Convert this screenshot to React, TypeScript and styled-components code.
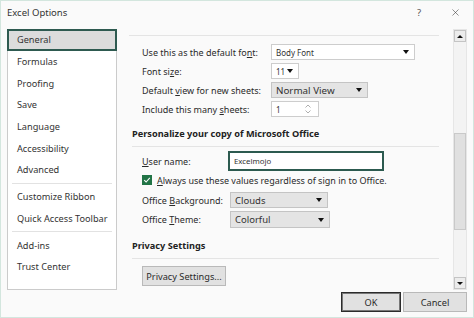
import React from "react";
import styled, {createGlobalStyle, css} from "styled-components";
import {X} from "lucide-react";

const GlobalStyle = createGlobalStyle`
  html, body {
    margin: 0;
    padding: 0;
  }
  body {
    font-family: "Noto Sans", "Open Sans", sans-serif;
    font-size: 9px;
    color: #262626;
    background: #fff;
  }
`;

const Window = styled.div`
  width: 474px;
  height: 318px;
  box-sizing: border-box;
  background: #fafafa;
  border: 1px solid #d3e6de;
  display: flex;
  flex-direction: column;
  overflow: hidden;
`;

const TitleBar = styled.div`
  height: 28px;
  box-sizing: border-box;
  padding: 0 0 5px 6px;
  display: flex;
  align-items: center;
  font-size: 9.5px;
  color: #333;
`;

const Title = styled.div`
  flex: 1;
`;

const Help = styled.div`
  width: 36px;
  text-align: center;
  color: #555;
  font-size: 9.5px;
`;

const Close = styled.div`
  width: 36px;
  display: flex;
  justify-content: center;
  color: #333;
`;

const Body = styled.div`
  height: 261px;
  display: flex;
  padding: 0 6px 0 6px;
`;

const Nav = styled.ul`
  width: 110px;
  box-sizing: border-box;
  margin: 0;
  padding: 0;
  list-style: none;
  background: #fff;
  border: 1px solid #cbcbcb;
  border-top: none;
`;

const NavItem = styled.li<{$active?: boolean}>`
  height: 21.7px;
  box-sizing: border-box;
  display: flex;
  align-items: center;
  padding-left: 9px;
  font-size: 9.2px;
  color: #333;
  white-space: nowrap;
  ${p => p.$active && css`
    background: #dcdcdc;
    border: 2px solid #2e5a50;
    padding-left: 8px;
    margin: 0 -1px;
  `}
`;

const NavRule = styled.li`
  height: 5px;
  display: flex;
  align-items: center;
  padding: 0 4px;
  &::after {
    content: "";
    flex: 1;
    height: 1px;
    background: #e2e2e2;
  }
`;

const Pane = styled.div`
  flex: 1;
  display: flex;
  flex-direction: column;
  padding: 6px 0 0 12px;
`;

const Rule = styled.div<{$inset?: number}>`
  height: 1px;
  background: #e4e4e4;
  margin: 0 6px 0 ${p => p.$inset ?? 0}px;
`;

const Rows = styled.div<{$top?: number}>`
  display: flex;
  flex-direction: column;
  gap: 3px;
  padding-left: 13px;
  margin-top: ${p => p.$top ?? 0}px;
`;

const Row = styled.div<{$label: number; $h?: number}>`
  display: grid;
  grid-template-columns: ${p => p.$label}px max-content;
  align-items: center;
  height: ${p => p.$h ?? 16}px;
`;

const Label = styled.span`
  color: #2a2a2a;
  white-space: nowrap;
`;

const Heading = styled.div<{$top: number}>`
  margin: ${p => p.$top}px 0 5px 3px;
  font-weight: 700;
  font-size: 9.2px;
  line-height: 14px;
  color: #222;
`;

const Box = styled.div<{$w: number; $gray?: boolean; $fs?: number}>`
  width: ${p => p.$w}px;
  height: 100%;
  box-sizing: border-box;
  display: flex;
  align-items: center;
  padding: 0 5px 0 4px;
  border: 1px solid ${p => p.$gray ? "#c4c4c4" : "#cdcdcd"};
  background: ${p => p.$gray ? "#e4e4e4" : "#fff"};
  font-size: ${p => p.$fs ?? 8}px;
  color: #333;
`;

const BoxText = styled.span`
  flex: 1;
  white-space: nowrap;
`;

const Caret = styled.span`
  width: 0;
  height: 0;
  border-left: 3px solid transparent;
  border-right: 3px solid transparent;
  border-top: 4px solid #111;
`;

const Spin = styled.span`
  display: flex;
  flex-direction: column;
  align-items: center;
  gap: 2px;
  margin-right: 2px;
`;

const Input = styled.div`
  width: 156px;
  height: 20px;
  box-sizing: border-box;
  border: 2px solid #2c5a4f;
  background: #fff;
  display: flex;
  align-items: center;
  padding-left: 4px;
  font-size: 7.8px;
  color: #333;
`;

const Check = styled.span`
  width: 10px;
  height: 10px;
  background: #227446;
  display: inline-flex;
  align-items: center;
  justify-content: center;
  margin-right: 5px;
`;

const CheckRow = styled.div`
  display: flex;
  align-items: center;
  height: 14px;
  margin-top: 2px;
  margin-bottom: 2px;
`;

const Button = styled.div<{$w: number; $default?: boolean}>`
  width: ${p => p.$w}px;
  height: 20px;
  box-sizing: border-box;
  display: flex;
  align-items: center;
  justify-content: center;
  background: #e1e1e1;
  border: 1px solid ${p => p.$default ? "#2b2b2b" : "#b9b9b9"};
  ${p => p.$default && css`box-shadow: inset 0 0 0 1px #777;`}
  font-size: 9.2px;
  color: #2a2a2a;
  white-space: nowrap;
`;

const ButtonSlot = styled.div`
  padding-left: 13px;
  margin-top: 7px;
`;

const ScrollBar = styled.div`
  width: 14px;
  margin-left: 8px;
  box-sizing: border-box;
  background: #f3f3f3;
  border: 1px solid #e6e6e6;
  display: flex;
  flex-direction: column;
`;

const ScrollArrow = styled.div<{$down?: boolean}>`
  height: 12px;
  box-sizing: border-box;
  background: #ececec;
  border: 1px solid #c4c4c4;
  display: flex;
  align-items: center;
  justify-content: center;
  &::after {
    content: "";
    border-left: 3px solid transparent;
    border-right: 3px solid transparent;
    ${p => p.$down ? "border-top: 3px solid #111;" : "border-bottom: 3px solid #111;"}
  }
`;

const Track = styled.div`
  flex: 1;
  display: flex;
  flex-direction: column;
  padding-top: 91px;
  padding-bottom: 47px;
`;

const Thumb = styled.div`
  flex: 1;
  background: #e0e0e0;
  border: 1px solid #c9c9c9;
`;

const Footer = styled.div`
  flex: 1;
  display: flex;
  justify-content: flex-end;
  gap: 2px;
  padding: 2px 6px 0 0;
`;

const Dropdown = ({w, text, gray, fs}: {w: number; text: string; gray?: boolean; fs?: number}) => (
    <Box $w={w} $gray={gray} $fs={fs}>
        <BoxText>{text}</BoxText>
        <Caret/>
    </Box>
);

const navTop = ["General", "Formulas", "Proofing", "Save", "Language", "Accessibility", "Advanced"];

export default function App() {
    return (
        <>
            <GlobalStyle/>
            <Window>
                <TitleBar>
                    <Title>Excel Options</Title>
                    <Help>?</Help>
                    <Close><X size={11} strokeWidth={1.2}/></Close>
                </TitleBar>
                <Body>
                    <Nav>
                        {navTop.map((n, i) => <NavItem key={n} $active={i === 0}>{n}</NavItem>)}
                        <NavRule/>
                        <NavItem>Customize Ribbon</NavItem>
                        <NavItem>Quick Access Toolbar</NavItem>
                        <NavRule/>
                        <NavItem>Add-ins</NavItem>
                        <NavItem>Trust Center</NavItem>
                    </Nav>
                    <Pane>
                        <Rule/>
                        <Rows $top={8}>
                            <Row $label={129}>
                                <Label>Use this as the default fo<u>n</u>t:</Label>
                                <Dropdown w={144} text="Body Font"/>
                            </Row>
                            <Row $label={129}>
                                <Label>Font si<u>z</u>e:</Label>
                                <Dropdown w={28} text="11"/>
                            </Row>
                            <Row $label={129}>
                                <Label>Default <u>v</u>iew for new sheets:</Label>
                                <Dropdown w={97} text="Normal View" gray fs={9.8}/>
                            </Row>
                            <Row $label={129}>
                                <Label>Include this many <u>s</u>heets:</Label>
                                <Box $w={48}>
                                    <BoxText>1</BoxText>
                                    <Spin>
                                        <svg width="6" height="4" viewBox="0 0 6 4"><path d="M0.5 3.5 L3 1 L5.5 3.5" fill="none" stroke="#9a9a9a" strokeWidth="0.8"/></svg>
                                        <svg width="6" height="4" viewBox="0 0 6 4"><path d="M0.5 0.5 L3 3 L5.5 0.5" fill="none" stroke="#9a9a9a" strokeWidth="0.8"/></svg>
                                    </Spin>
                                </Box>
                            </Row>
                        </Rows>
                        <Heading $top={10}>Personalize your copy of Microsoft Office</Heading>
                        <Rule $inset={3}/>
                        <Rows $top={4}>
                            <Row $label={86} $h={20}>
                                <Label><u>U</u>ser name:</Label>
                                <Input>Excelmojo</Input>
                            </Row>
                        </Rows>
                        <Rows>
                            <CheckRow>
                                <Check>
                                    <svg width="8" height="8" viewBox="0 0 8 8"><path d="M1.2 4.2 L3.1 6 L6.8 1.8" fill="none" stroke="#fff" strokeWidth="1.1"/></svg>
                                </Check>
                                <Label><u>A</u>lways use these values regardless of sign in to Office.</Label>
                            </CheckRow>
                        </Rows>
                        <Rows $top={3}>
                            <Row $label={88}>
                                <Label>Office <u>B</u>ackground:</Label>
                                <Dropdown w={98} text="Clouds" gray fs={9.5}/>
                            </Row>
                            <Row $label={88} $h={17}>
                                <Label>Office <u>T</u>heme:</Label>
                                <Dropdown w={100} text="Colorful" gray fs={9.5}/>
                            </Row>
                        </Rows>
                        <Heading $top={11}>Privacy Settings</Heading>
                        <Rule $inset={3}/>
                        <ButtonSlot>
                            <Button $w={84}>Privacy Settings...</Button>
                        </ButtonSlot>
                    </Pane>
                    <ScrollBar>
                        <ScrollArrow/>
                        <Track><Thumb/></Track>
                        <ScrollArrow $down/>
                    </ScrollBar>
                </Body>
                <Footer>
                    <Button $w={60} $default>OK</Button>
                    <Button $w={64}>Cancel</Button>
                </Footer>
            </Window>
        </>
    );
}
